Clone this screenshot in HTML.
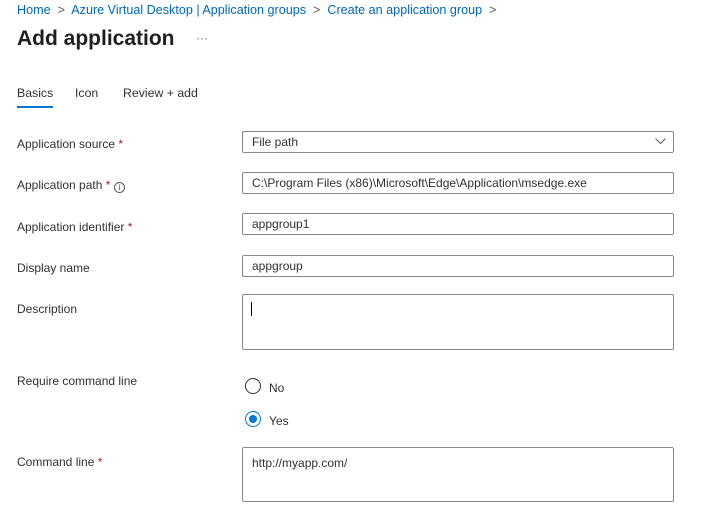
<!DOCTYPE html><html><head><style>
body{margin:0;width:710px;height:516px;background:#fff;font-family:"Liberation Sans",sans-serif;color:#323130;position:relative;overflow:hidden}
.a{position:absolute;white-space:nowrap}
.l{font-size:12px;left:17px}
.r{color:#a4262c}
.b{position:absolute;left:242px;width:432px;border:1px solid #8a8886;border-radius:2px;box-sizing:border-box;font-size:12px;padding-left:9px;color:#323130}
.bc{color:#0067b8;font-size:12.6px}
</style></head><body>
<div class="a bc" style="left:17px;top:3px">Home <span style="color:#605e5c">&nbsp;&gt;&nbsp;</span> Azure Virtual Desktop | Application groups <span style="color:#605e5c">&nbsp;&gt;&nbsp;</span> Create an application group <span style="color:#605e5c">&nbsp;&gt;</span></div>
<div class="a" style="left:17px;top:27px;font-size:21px;font-weight:bold;color:#201f1e">Add application</div>
<div class="a" style="left:196px;top:31px;font-size:12px;color:#605e5c">···</div>
<div class="a" style="left:17px;top:86px;font-size:12.3px">Basics</div>
<div class="a" style="left:17px;top:106px;width:36px;height:2px;background:#0078d4"></div>
<div class="a" style="left:75px;top:86px;font-size:12.3px">Icon</div>
<div class="a" style="left:123px;top:86px;font-size:12.3px">Review + add</div>

<div class="a l" style="top:137px">Application source <span class="r">*</span></div>
<div class="b" style="top:131px;height:22px;line-height:20px">File path<svg style="position:absolute;right:7px;top:6px" width="11" height="7"><path d="M0.5 0.5L5.5 5.5L10.5 0.5" stroke="#605e5c" fill="none"/></svg></div>
<div class="a l" style="top:178px">Application path <span class="r">*</span> <span style="display:inline-block;width:9px;height:9px;border:1px solid #605e5c;border-radius:50%;font-size:8px;line-height:9px;text-align:center;vertical-align:-1px">i</span></div>
<div class="b" style="top:172px;height:22px;line-height:20px">C:\Program Files (x86)\Microsoft\Edge\Application\msedge.exe</div>
<div class="a l" style="top:220px">Application identifier <span class="r">*</span></div>
<div class="b" style="top:213px;height:22px;line-height:20px">appgroup1</div>
<div class="a l" style="top:261px">Display name</div>
<div class="b" style="top:255px;height:22px;line-height:20px">appgroup</div>
<div class="a l" style="top:302px">Description</div>
<div class="b" style="top:294px;height:56px"><div style="position:absolute;left:8px;top:7px;width:1px;height:14px;background:#000"></div></div>
<div class="a l" style="top:374px">Require command line</div>
<div class="a" style="left:245px;top:378px;width:16px;height:16px;border:1px solid #323130;border-radius:50%;box-sizing:border-box"></div>
<div class="a" style="left:269px;top:381px;font-size:12px">No</div>
<div class="a" style="left:245px;top:411px;width:16px;height:16px;border:1px solid #0078d4;border-radius:50%;box-sizing:border-box"><div style="position:absolute;left:3px;top:3px;width:8px;height:8px;border-radius:50%;background:#0078d4"></div></div>
<div class="a" style="left:269px;top:414px;font-size:12px">Yes</div>
<div class="a l" style="top:455px">Command line <span class="r">*</span></div>
<div class="b" style="top:447px;height:55px;padding-top:8px">http://myapp.com/</div>
</body></html>
